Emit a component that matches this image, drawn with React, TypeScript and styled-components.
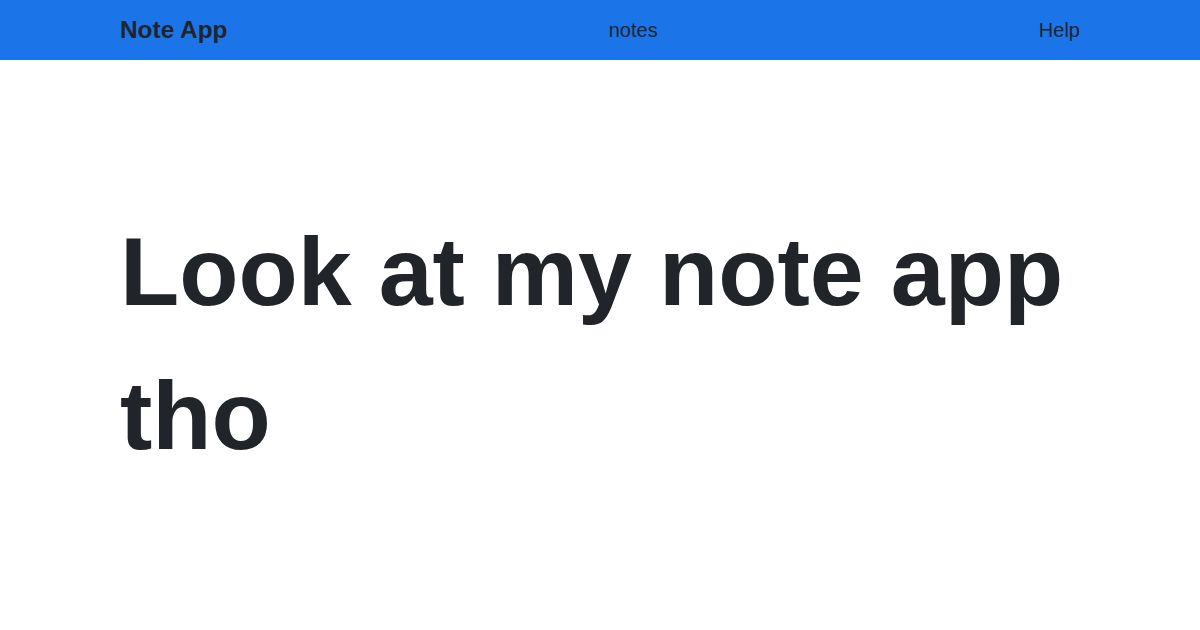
import React from "react";
import styled, { createGlobalStyle } from "styled-components";

const GlobalStyle = createGlobalStyle`
  * {
    box-sizing: border-box;
  }
  body {
    margin: 0;
    background: #ffffff;
    color: #212529;
    font-family: "Liberation Sans", Arial, sans-serif;
  }
`;

const NavBar = styled.nav`
  height: 60px;
  background-color: #1b74e8;
  display: flex;
  align-items: center;
`;

const NavInner = styled.div`
  width: 960px;
  margin: 0 auto;
  display: flex;
  align-items: center;
  justify-content: space-between;
`;

const Brand = styled.a`
  font-size: 24.4px;
  font-weight: 700;
  color: #212529;
  text-decoration: none;
`;

const NavLink = styled.a`
  font-size: 20px;
  color: #212529;
  text-decoration: none;
`;

const Main = styled.main`
  width: 960px;
  margin: 0 auto;
  padding-top: 140px;
`;

const Title = styled.h1`
  margin: 0;
  font-size: 97px;
  font-weight: 700;
  line-height: 144px;
  color: #212529;
`;

const App: React.FC = () => {
  return (
    <>
      <GlobalStyle />
      <NavBar>
        <NavInner>
          <Brand href="#">Note App</Brand>
          <NavLink href="#">notes</NavLink>
          <NavLink href="#">Help</NavLink>
        </NavInner>
      </NavBar>
      <Main>
        <Title>Look at my note app tho</Title>
      </Main>
    </>
  );
};

export default App;
